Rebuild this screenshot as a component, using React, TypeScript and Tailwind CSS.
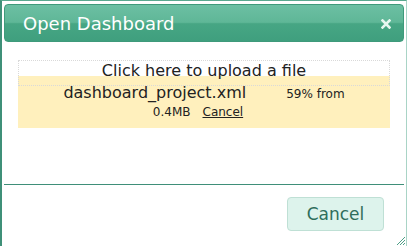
import React from "react";

export default function App() {
  return (
    <div
      className="relative h-[246px] w-[407px] overflow-hidden border-l-2 border-r border-t border-l-[#3f9078] border-r-[#a9d4c6] border-t-[#5aa88f] bg-white px-[2px] pt-[3px] flex flex-col"
      style={{ fontFamily: '"DejaVu Sans", Verdana, sans-serif' }}
    >
      {/* Title bar */}
      <div className="flex h-[38px] flex-none items-center justify-between rounded-[4px] border border-[#3f9a7b] bg-[linear-gradient(to_bottom,#6cbfa3_0%,#5fb797_48%,#47a684_52%,#3f9f7e_100%)] pl-[18px] pr-[12px]">
        <span className="pt-[2px] text-[18px] leading-[22px] text-white">Open Dashboard</span>
        <svg width="10" height="10" viewBox="0 0 10 10" className="mt-[1px]">
          <path d="M1.5 1.5 L8.5 8.5 M8.5 1.5 L1.5 8.5" stroke="#e6f6ef" strokeWidth="2.6" strokeLinecap="square" />
        </svg>
      </div>

      {/* Body */}
      <div className="flex-none px-[14px] pt-[18px]">
        <div className="relative pt-[16px]">
          <div className="h-[52px] bg-[#FFF0BD] pt-[7px] text-[#222]">
            <div className="flex items-baseline justify-center">
              <span className="text-[16px] leading-[20px]">dashboard_project.xml</span>
              <span className="ml-[40px] text-[12px] leading-[20px]">59% from</span>
            </div>
            <div className="mt-[1px] flex items-baseline justify-center pr-[12px] text-[12px] leading-[15px]">
              <span>0.4MB</span>
              <span className="ml-[12px] underline">Cancel</span>
            </div>
          </div>
          <div className="absolute left-0 right-0 top-0 h-[26px] border border-dotted border-[#d9d9d9] text-center text-[16px] leading-[20px] text-[#222]">
            Click here to upload a file
          </div>
        </div>
      </div>

      <div className="h-[56px] flex-none" />
      <div className="h-px flex-none bg-[#3f8f79]" />

      {/* Footer */}
      <div className="flex flex-none justify-end pr-[20px] pt-[12px]">
        <button className="h-[34px] w-[97px] rounded-[4px] border border-[#bfe0d5] bg-[#ddf3ec] text-[17px] leading-[20px] text-[#2f6e5b]">
          Cancel
        </button>
      </div>

      {/* Resize grip */}
      <svg
        width="12"
        height="12"
        viewBox="0 0 12 12"
        className="absolute bottom-0 right-0"
      >
        <path d="M11 3 L3 11 M11 6 L6 11 M11 9 L9 11" stroke="#4f9f87" strokeWidth="1" />
      </svg>
    </div>
  );
}
